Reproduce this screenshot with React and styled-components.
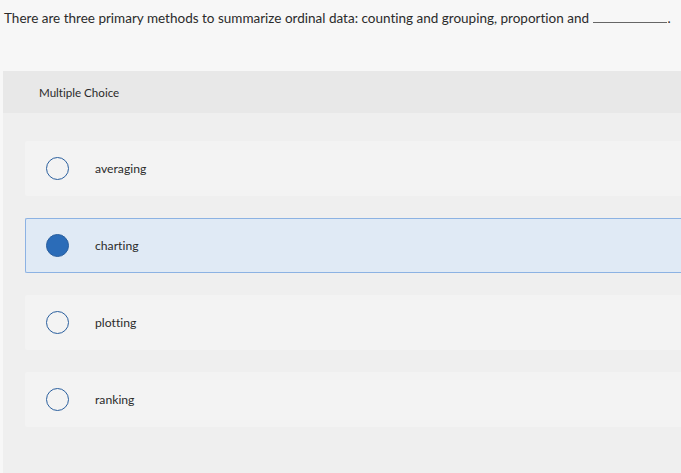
import styled, { createGlobalStyle } from "styled-components";
import { useState } from "react";

const Global = createGlobalStyle`
    html, body {
        margin: 0;
        padding: 0;
        background: #f7f7f7;
        font-family: Lato, "Open Sans", "Liberation Sans", sans-serif;
        font-variant-ligatures: none;
        color: #2b2b2b;
        overflow: hidden;
    }
`;

const choices = ["averaging", "charting", "plotting", "ranking"];

export default function App() {
    const [picked, setPicked] = useState(1);
    return (
        <Page>
            <Global />
            <Question>
                There are three primary methods to summarize ordinal data: counting and grouping, proportion and <Blank />.
            </Question>
            <Panel>
                <Header>Multiple Choice</Header>
                <Options>
                    {choices.map((c, i) => (
                        <Option key={c} $active={picked === i} onClick={() => setPicked(i)}>
                            <Radio $active={picked === i} />
                            <Label>{c}</Label>
                        </Option>
                    ))}
                </Options>
            </Panel>
        </Page>
    );
}

const Page = styled.div`
    width: 681px;
    height: 473px;
    display: flex;
    flex-direction: column;
`;

const Question = styled.p`
    margin: 0;
    padding: 10px 0 0 4px;
    font-size: 13.5px;
    line-height: 17px;
    white-space: nowrap;
    height: 61px;
    box-sizing: border-box;
`;

const Blank = styled.span`
    display: inline-block;
    width: 74px;
    border-bottom: 1px solid #666;
    vertical-align: baseline;
    margin-left: 1px;
`;

const Panel = styled.div`
    flex: 1;
    margin: 10px 0 0 3px;
    background: #efefef;
    display: flex;
    flex-direction: column;
`;

const Header = styled.div`
    height: 42px;
    background: #e8e8e8;
    padding-left: 36px;
    display: flex;
    align-items: center;
    font-size: 11.6px;
`;

const Options = styled.div`
    display: flex;
    flex-direction: column;
    gap: 22px;
    padding: 28px 0 0 22px;
`;

const Option = styled.div`
    height: 55px;
    box-sizing: border-box;
    display: flex;
    align-items: center;
    padding-left: ${p => (p.$active ? "20px" : "21px")};
    background: ${p => (p.$active ? "#e0eaf5" : "#f3f3f3")};
    border: ${p => (p.$active ? "1px solid #8cb2e3" : "none")};
    border-right: none;
    border-radius: 2px 0 0 2px;
    cursor: pointer;
`;

const Radio = styled.span`
    width: 23px;
    height: 23px;
    box-sizing: border-box;
    border-radius: 50%;
    border: 1px solid #2a5f9e;
    background: ${p => (p.$active ? "#2b6cb8" : "transparent")};
    flex-shrink: 0;
`;

const Label = styled.span`
    margin-left: 26px;
    font-size: 12.2px;
`;
